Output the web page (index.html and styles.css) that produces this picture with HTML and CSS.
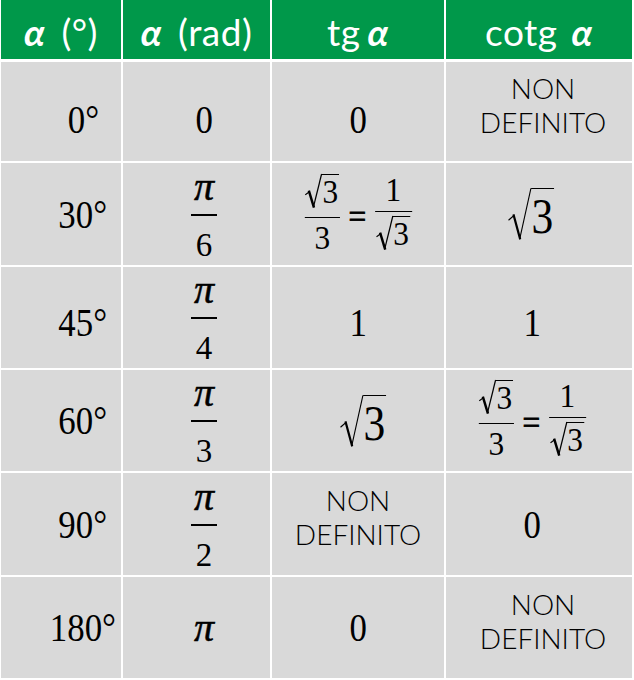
FILE: index.html
```html
<!DOCTYPE html>
<html lang="it">
<head>
<meta charset="utf-8">
<title>Tangente e cotangente</title>
<link rel="stylesheet" href="styles.css">
</head>
<body>
<div class="table">
  <div class="th"><span class="alpha sp">α</span>(°)</div>
  <div class="th"><span class="alpha sp">α</span>(rad)</div>
  <div class="th">tg<span class="alpha gap">α</span></div>
  <div class="th">cotg<span class="alpha gap wide">α</span></div>

  <!-- 0° -->
  <div class="td c1 r1"><span class="math">0°</span></div>
  <div class="td c2 r1"><span class="math">0</span></div>
  <div class="td c3 r1"><span class="math">0</span></div>
  <div class="td c4 nd"><span class="txt">NON<br>DEFINITO</span></div>

  <!-- 30° -->
  <div class="td c1"><span class="math">30°</span></div>
  <div class="td c2"><span class="math free"><span class="frac pf"><span class="n pi">π</span><span class="d">6</span></span></span></div>
  <div class="td c3"><span class="math sm">
      <span class="frac"><span class="n"><span class="sq"><svg viewBox="0 0 100 100" preserveAspectRatio="none"><path class="t1" d="M0 62 L22 54"/><path class="t2" d="M22 54 L50 98"/><path class="t1" d="M50 98 L100 2"/></svg><span class="rc">3</span></span></span><span class="d">3</span></span>
      <span class="eq">=</span>
      <span class="frac"><span class="n">1</span><span class="d"><span class="sq"><svg viewBox="0 0 100 100" preserveAspectRatio="none"><path class="t1" d="M0 62 L22 54"/><path class="t2" d="M22 54 L50 98"/><path class="t1" d="M50 98 L100 2"/></svg><span class="rc">3</span></span></span></span>
  </span></div>
  <div class="td c4"><span class="math"><span class="sq big"><svg viewBox="0 0 100 100" preserveAspectRatio="none"><path class="t1" d="M0 62 L22 54"/><path class="t2" d="M22 54 L50 98"/><path class="t1" d="M50 98 L100 2"/></svg><span class="rc">3</span></span></span></div>

  <!-- 45° -->
  <div class="td c1 r3"><span class="math">45°</span></div>
  <div class="td c2"><span class="math free"><span class="frac pf"><span class="n pi">π</span><span class="d">4</span></span></span></div>
  <div class="td c3 r3"><span class="math">1</span></div>
  <div class="td c4 r3"><span class="math">1</span></div>

  <!-- 60° -->
  <div class="td c1"><span class="math">60°</span></div>
  <div class="td c2"><span class="math free"><span class="frac pf"><span class="n pi">π</span><span class="d">3</span></span></span></div>
  <div class="td c3 shift"><span class="math"><span class="sq big"><svg viewBox="0 0 100 100" preserveAspectRatio="none"><path class="t1" d="M0 62 L22 54"/><path class="t2" d="M22 54 L50 98"/><path class="t1" d="M50 98 L100 2"/></svg><span class="rc">3</span></span></span></div>
  <div class="td c4"><span class="math sm">
      <span class="frac"><span class="n"><span class="sq"><svg viewBox="0 0 100 100" preserveAspectRatio="none"><path class="t1" d="M0 62 L22 54"/><path class="t2" d="M22 54 L50 98"/><path class="t1" d="M50 98 L100 2"/></svg><span class="rc">3</span></span></span><span class="d">3</span></span>
      <span class="eq">=</span>
      <span class="frac"><span class="n">1</span><span class="d"><span class="sq"><svg viewBox="0 0 100 100" preserveAspectRatio="none"><path class="t1" d="M0 62 L22 54"/><path class="t2" d="M22 54 L50 98"/><path class="t1" d="M50 98 L100 2"/></svg><span class="rc">3</span></span></span></span>
  </span></div>

  <!-- 90° -->
  <div class="td c1"><span class="math">90°</span></div>
  <div class="td c2"><span class="math free"><span class="frac pf"><span class="n pi">π</span><span class="d">2</span></span></span></div>
  <div class="td c3 nd"><span class="txt">NON<br>DEFINITO</span></div>
  <div class="td c4"><span class="math">0</span></div>

  <!-- 180° -->
  <div class="td c1"><span class="math">180°</span></div>
  <div class="td c2"><span class="math free"><span class="pi">π</span></span></div>
  <div class="td c3"><span class="math">0</span></div>
  <div class="td c4 nd"><span class="txt">NON<br>DEFINITO</span></div>
</div>
</body>
</html>
```

FILE: styles.css
```css
html, body {
  margin: 0;
  padding: 0;
  background: #ffffff;
}

.table {
  display: grid;
  width: 634px;
  height: 680px;
  box-sizing: border-box;
  grid-template-columns: 120px 147px 172px 186px;
  grid-template-rows: 60px 99px 102px 101px 101px 102px 101px;
  gap: 2px;
  padding: 0 2px 2px 1px;
  background: #ffffff;
}

.th {
  margin-bottom: 1px;
  background: #00984a;
  color: #ffffff;
  font-family: Lato, "Open Sans", sans-serif;
  font-size: 37px;
  font-weight: 400;
  letter-spacing: 0.5px;
  display: flex;
  align-items: center;
  justify-content: center;
  padding-top: 3px;
  white-space: nowrap;
}

.alpha {
  font-weight: 700;
  font-style: italic;
}

.alpha.sp { margin-right: 16px; }
.alpha.gap { margin-left: 7px; }
.alpha.wide { margin-left: 14px; }

.td {
  background: #d9d9d9;
  display: flex;
  align-items: center;
  justify-content: center;
  box-sizing: border-box;
}

.c1 { padding-left: 44px; }
.c2 { padding-left: 15px; }
.c3.shift { padding-left: 12px; }
.c4 { padding-right: 14px; }
.c4.nd { padding-right: 0; padding-left: 8px; }

.r1 { padding-top: 15px; }
.r3 { padding-top: 9px; }

.nd { padding-bottom: 14px; }

.txt {
  font-family: Lato, "Open Sans", sans-serif;
  font-weight: 300;
  font-size: 28px;
  line-height: 34px;
  color: #000;
  text-align: center;
}

.math {
  font-family: "Liberation Serif", "Times New Roman", serif;
  font-size: 41px;
  color: #000;
  display: inline-flex;
  align-items: center;
  transform: scaleX(0.85);
  white-space: nowrap;
  line-height: 1;
}

.math.free {
  transform: none;
}

.math.sm {
  font-size: 33px;
  transform: scaleX(0.95);
}

.frac {
  display: inline-flex;
  flex-direction: column;
  align-items: center;
}

.frac > .n {
  padding: 0 1px 4px;
  line-height: 1;
}

.frac > .d {
  border-top: 1.5px solid #000;
  padding: 4px 2px 0;
  line-height: 1;
  align-self: stretch;
  text-align: center;
}

.pf > .d {
  font-size: 33px;
  border-top-width: 2px;
  padding-top: 13px;
}

.pi {
  font-style: italic;
  font-weight: 400;
  font-size: 40px;
  -webkit-text-stroke: 0.5px #000;
}

.frac > .n.pi {
  padding: 0 3px 7px;
}

.eq {
  margin: 6px 9px 0;
  -webkit-text-stroke: 0.8px #000;
}

.sq {
  display: inline-flex;
  align-items: flex-start;
}

.sq svg {
  width: 0.5em;
  height: 1.0em;
  display: block;
  overflow: visible;
}

.sq svg path {
  fill: none;
  stroke: #000;
  vector-effect: non-scaling-stroke;
  stroke-linecap: square;
}

.sq svg .t1 { stroke-width: 1.3px; }
.sq svg .t2 { stroke-width: 2.6px; }

.sq .rc {
  display: block;
  border-top: 1.5px solid #000;
  box-sizing: border-box;
  height: 1.0em;
  line-height: 1.05em;
  padding: 0 1px;
}

.sq.big {
  font-size: 1.25em;
}
```
